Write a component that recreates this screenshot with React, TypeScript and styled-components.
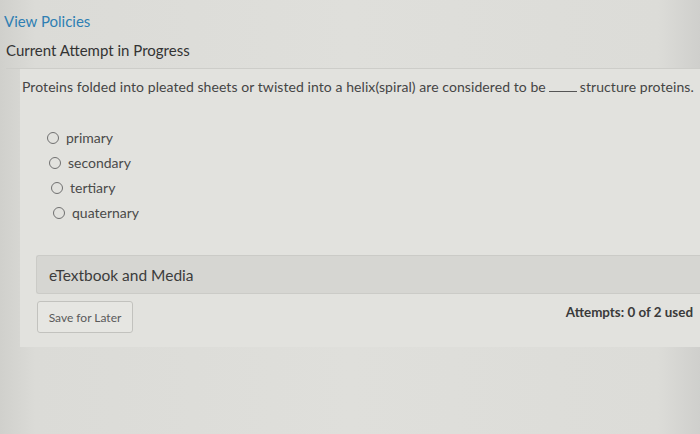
import React from "react";
import styled, { createGlobalStyle } from "styled-components";

const GlobalStyle = createGlobalStyle`
  html, body {
    margin: 0;
    padding: 0;
  }
  body {
    width: 700px;
    height: 434px;
    overflow: hidden;
    font-family: Lato, "Open Sans", sans-serif;
    background: linear-gradient(90deg, #d0d0cc 0%, #dbdbd7 5%, #dfdfdb 50%, #dcdcd8 94%, #cfcfcc 100%);
  }
`;

const options = ["primary", "secondary", "tertiary", "quaternary"];

export default function App() {
  return (
    <>
      <GlobalStyle />
      <Page>
        <PolicyLink>View Policies</PolicyLink>
        <AttemptTitle>Current Attempt in Progress</AttemptTitle>
        <Panel>
          <Question>
            Proteins folded into pleated sheets or twisted into a helix(spiral) are considered to be
            <Blank />
            structure proteins.
          </Question>
          <OptionList>
            {options.map((opt, i) => (
              <OptionRow key={opt} shift={i * 2}>
                <Radio />
                <OptionLabel>{opt}</OptionLabel>
              </OptionRow>
            ))}
          </OptionList>
          <MediaBar>eTextbook and Media</MediaBar>
          <Footer>
            <SaveButton>Save for Later</SaveButton>
            <Attempts>Attempts: 0 of 2 used</Attempts>
          </Footer>
        </Panel>
      </Page>
    </>
  );
}

const Page = styled.div`
  display: flex;
  flex-direction: column;
  padding-top: 11px;
`;

const PolicyLink = styled.div`
  font-size: 15px;
  color: #2f7fb3;
  padding-left: 4px;
  line-height: 20px;
`;

const AttemptTitle = styled.div`
  font-size: 15px;
  color: #333333;
  margin-top: 9px;
  margin-left: 6px;
  line-height: 20px;
  padding-bottom: 8px;
  border-bottom: 1px solid #cdcdc9;
`;

const Panel = styled.div`
  display: flex;
  flex-direction: column;
  margin-left: 20px;
  padding-bottom: 14px;
  background: #e2e2de;
`;

const Question = styled.div`
  font-size: 14px;
  color: #454545;
  line-height: 20px;
  margin-top: 8px;
  padding-left: 2px;
  white-space: nowrap;
  letter-spacing: 0.07px;
`;

const Blank = styled.span`
  display: inline-block;
  width: 28px;
  margin: 0 3px;
  border-bottom: 1px solid #555;
`;

const OptionList = styled.div`
  display: flex;
  flex-direction: column;
  gap: 6px;
  margin-top: 31px;
  padding-left: 27px;
`;

const OptionRow = styled.div<{ shift: number }>`
  display: flex;
  align-items: center;
  gap: 7px;
  height: 19px;
  margin-left: ${(p) => p.shift}px;
`;

const Radio = styled.span`
  width: 12px;
  height: 12px;
  border: 1.5px solid #707070;
  border-radius: 50%;
  box-sizing: border-box;
  flex: none;
`;

const OptionLabel = styled.span`
  font-size: 14px;
  color: #4a4a4a;
  line-height: 19px;
`;

const MediaBar = styled.div`
  margin-top: 33px;
  margin-left: 16px;
  height: 37px;
  display: flex;
  align-items: center;
  padding-left: 12px;
  font-size: 15.5px;
  color: #3c3c3c;
  background: #d6d6d2;
  border: 1px solid #cbcbc7;
  border-right: none;
  border-radius: 3px 0 0 3px;
`;

const Footer = styled.div`
  display: flex;
  justify-content: space-between;
  align-items: flex-start;
  margin-top: 7px;
  margin-left: 17px;
  padding-right: 7px;
`;

const SaveButton = styled.button`
  width: 96px;
  height: 32px;
  font-family: Lato, "Open Sans", sans-serif;
  font-size: 12px;
  color: #5a5a5a;
  background: #e6e6e2;
  border: 1px solid #c2c2be;
  border-radius: 3px;
  padding: 0;
`;

const Attempts = styled.div`
  font-size: 13.4px;
  font-weight: 700;
  color: #3a3a3a;
  margin-top: 3px;
`;
